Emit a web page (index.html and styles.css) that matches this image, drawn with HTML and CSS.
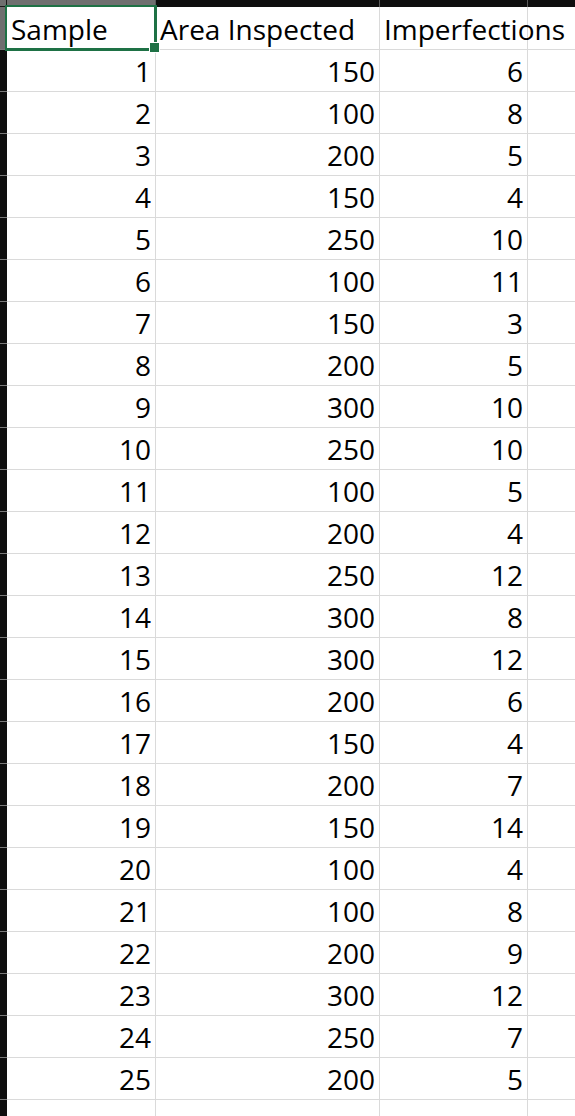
FILE: index.html
```html
<!DOCTYPE html>
<html>
<head>
<meta charset="utf-8">
<link rel="stylesheet" href="styles.css">
</head>
<body>
<div class="sheet">
  <div class="corner"></div><div class="colhead sel"></div><div class="colhead"></div><div class="colhead"></div><div class="colhead last"></div>

  <div class="rowhead sel"></div><div class="cell head">Sample</div><div class="cell head">Area Inspected</div><div class="cell head">Imperfections</div><div class="cell end"></div>

  <div class="rowhead"></div><div class="cell num">1</div><div class="cell num">150</div><div class="cell num">6</div><div class="cell end"></div>
  <div class="rowhead"></div><div class="cell num">2</div><div class="cell num">100</div><div class="cell num">8</div><div class="cell end"></div>
  <div class="rowhead"></div><div class="cell num">3</div><div class="cell num">200</div><div class="cell num">5</div><div class="cell end"></div>
  <div class="rowhead"></div><div class="cell num">4</div><div class="cell num">150</div><div class="cell num">4</div><div class="cell end"></div>
  <div class="rowhead"></div><div class="cell num">5</div><div class="cell num">250</div><div class="cell num">10</div><div class="cell end"></div>
  <div class="rowhead"></div><div class="cell num">6</div><div class="cell num">100</div><div class="cell num">11</div><div class="cell end"></div>
  <div class="rowhead"></div><div class="cell num">7</div><div class="cell num">150</div><div class="cell num">3</div><div class="cell end"></div>
  <div class="rowhead"></div><div class="cell num">8</div><div class="cell num">200</div><div class="cell num">5</div><div class="cell end"></div>
  <div class="rowhead"></div><div class="cell num">9</div><div class="cell num">300</div><div class="cell num">10</div><div class="cell end"></div>
  <div class="rowhead"></div><div class="cell num">10</div><div class="cell num">250</div><div class="cell num">10</div><div class="cell end"></div>
  <div class="rowhead"></div><div class="cell num">11</div><div class="cell num">100</div><div class="cell num">5</div><div class="cell end"></div>
  <div class="rowhead"></div><div class="cell num">12</div><div class="cell num">200</div><div class="cell num">4</div><div class="cell end"></div>
  <div class="rowhead"></div><div class="cell num">13</div><div class="cell num">250</div><div class="cell num">12</div><div class="cell end"></div>
  <div class="rowhead"></div><div class="cell num">14</div><div class="cell num">300</div><div class="cell num">8</div><div class="cell end"></div>
  <div class="rowhead"></div><div class="cell num">15</div><div class="cell num">300</div><div class="cell num">12</div><div class="cell end"></div>
  <div class="rowhead"></div><div class="cell num">16</div><div class="cell num">200</div><div class="cell num">6</div><div class="cell end"></div>
  <div class="rowhead"></div><div class="cell num">17</div><div class="cell num">150</div><div class="cell num">4</div><div class="cell end"></div>
  <div class="rowhead"></div><div class="cell num">18</div><div class="cell num">200</div><div class="cell num">7</div><div class="cell end"></div>
  <div class="rowhead"></div><div class="cell num">19</div><div class="cell num">150</div><div class="cell num">14</div><div class="cell end"></div>
  <div class="rowhead"></div><div class="cell num">20</div><div class="cell num">100</div><div class="cell num">4</div><div class="cell end"></div>
  <div class="rowhead"></div><div class="cell num">21</div><div class="cell num">100</div><div class="cell num">8</div><div class="cell end"></div>
  <div class="rowhead"></div><div class="cell num">22</div><div class="cell num">200</div><div class="cell num">9</div><div class="cell end"></div>
  <div class="rowhead"></div><div class="cell num">23</div><div class="cell num">300</div><div class="cell num">12</div><div class="cell end"></div>
  <div class="rowhead"></div><div class="cell num">24</div><div class="cell num">250</div><div class="cell num">7</div><div class="cell end"></div>
  <div class="rowhead"></div><div class="cell num">25</div><div class="cell num">200</div><div class="cell num">5</div><div class="cell end"></div>
  <div class="rowhead"></div><div class="cell"></div><div class="cell"></div><div class="cell"></div><div class="cell end"></div>

  <div class="selection"></div>
  <div class="handle"></div>
</div>
</body>
</html>
```

FILE: styles.css
```css
html, body {
  margin: 0;
  padding: 0;
  background: #ffffff;
  overflow: hidden;
}

.sheet {
  position: relative;
  display: grid;
  grid-template-columns: 7px 149px 224px 148px 1fr;
  grid-template-rows: 7px 43px repeat(26, 42px);
  width: 575px;
  height: 1116px;
  overflow: hidden;
  font-family: "Open Sans", "Liberation Sans", sans-serif;
  font-size: 28px;
  color: #000000;
}

.corner {
  background: #6f6f6f;
  box-shadow: inset -1px -1px 0 #1a1a1a;
}

.colhead {
  background: #0e0e0e;
  border-right: 1px solid #5a5a5a;
  box-sizing: border-box;
}

.colhead.sel {
  background: #6f6f6f;
}

.colhead.last {
  border-right: none;
}

.rowhead {
  background: #0e0e0e;
  border-bottom: 1px solid #7a7a7a;
  box-sizing: border-box;
}

.rowhead.sel {
  background: #6f6f6f;
}

.cell {
  box-sizing: border-box;
  border-right: 1px solid #dadada;
  border-bottom: 1px solid #dadada;
  padding-top: 2px;
  line-height: 39px;
  white-space: nowrap;
  overflow: visible;
}

.cell.end {
  border-right: none;
}

.head {
  padding-top: 3px;
  line-height: 39px;
  padding-left: 4px;
  text-align: left;
}

.num {
  padding-right: 4px;
  text-align: right;
}

.selection {
  position: absolute;
  left: 5px;
  top: 5px;
  width: 152px;
  height: 46px;
  box-sizing: border-box;
  border-style: solid;
  border-color: #1e7145;
  border-width: 2px 3px 3px 2px;
  pointer-events: none;
}

.handle {
  position: absolute;
  left: 150px;
  top: 43px;
  width: 9px;
  height: 9px;
  background: #1e7145;
  box-shadow: 0 0 0 1px #ffffff;
}
```
